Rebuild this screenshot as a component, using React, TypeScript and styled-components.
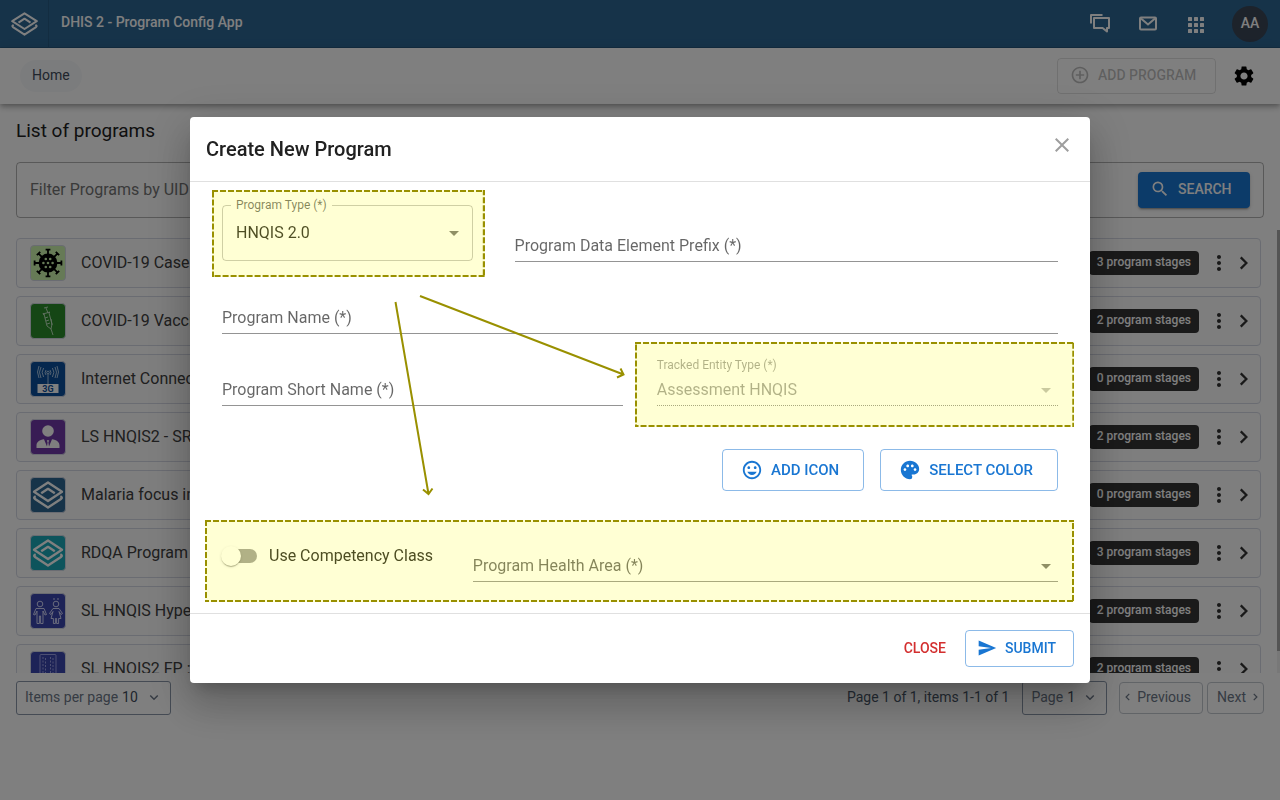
import React from 'react';
import styled, { createGlobalStyle } from 'styled-components';
import {
  MdAddCircleOutline,
  MdArrowDropDown,
  MdClose,
  MdInsertEmoticon,
  MdMoreVert,
  MdPalette,
  MdSearch,
  MdSend,
  MdSettings,
} from 'react-icons/md';

const GlobalStyle = createGlobalStyle`
  * { box-sizing: border-box; }
  body {
    margin: 0;
    background: #ffffff;
    color: #212121;
    font-family: Roboto, "Liberation Sans", sans-serif;
    font-size: 16px;
    line-height: 24px;
  }
  button, input, select { font-family: inherit; margin: 0; }
`;

/* ---------- Top bars ---------- */

const HeaderBar = styled.header`
  display: flex;
  align-items: center;
  height: 48px;
  background: #2c6693;
  color: #ffffff;
  border-bottom: 1px solid #265a82;
`;

const LogoLink = styled.a`
  display: flex;
  align-items: center;
  justify-content: center;
  width: 49px;
  height: 47px;
  border-right: 1px solid #265a82;
  color: #ffffff;
`;

const AppName = styled.div`
  flex: 1;
  padding: 0 0 4px 12px;
  font-size: 14px;
  font-weight: 500;
  line-height: 20px;
`;

const HeaderActions = styled.nav`
  display: flex;
  align-items: center;
  padding-right: 12px;
`;

const HeaderButton = styled.button`
  display: flex;
  align-items: center;
  justify-content: center;
  width: 48px;
  height: 47px;
  padding: 0;
  border: 0;
  background: transparent;
  color: #ffffff;
`;

const Avatar = styled.button`
  width: 36px;
  height: 36px;
  margin-left: 12px;
  padding: 0 0 2px;
  border: 0;
  border-radius: 50%;
  background: #3a4657;
  color: #ffffff;
  font-size: 14px;
  font-weight: 500;
`;

const SubBar = styled.div`
  position: relative;
  display: flex;
  align-items: center;
  justify-content: space-between;
  height: 56px;
  padding: 0 24px 0 20px;
  background: #ffffff;
  box-shadow: 0 2px 4px -1px rgba(0, 0, 0, 0.2), 0 4px 5px rgba(0, 0, 0, 0.14),
    0 1px 10px rgba(0, 0, 0, 0.12);
`;

const Crumb = styled.a`
  padding: 3px 12px 5px;
  border-radius: 16px;
  background: #f7f9fb;
  color: #404b5a;
  font-size: 14px;
  text-decoration: none;
`;

const SubActions = styled.div`
  display: flex;
  align-items: center;
  gap: 16px;
`;

const IconButton = styled.button`
  display: flex;
  align-items: center;
  justify-content: center;
  padding: 0;
  border: 0;
  background: transparent;
  color: #000000;
`;

/* ---------- Buttons ---------- */

const Button = styled.button<{ $size?: 'large' | 'medium'; $tone?: 'fill' | 'outline' | 'danger' }>`
  display: inline-flex;
  align-items: center;
  height: ${(p) => (p.$size === 'large' ? 42 : 36)}px;
  padding: ${(p) => (p.$size === 'large' ? '0 24px 0 18px' : '0 12px 2px')};
  gap: 8px;
  border: 1px solid rgba(25, 118, 210, 0.5);
  border-radius: 4px;
  background: transparent;
  color: #1976d2;
  font-size: ${(p) => (p.$size === 'large' ? 15 : 14)}px;
  font-weight: 500;
  line-height: 24px;
  text-transform: uppercase;
  white-space: nowrap;

  ${(p) =>
    p.$tone === 'fill' &&
    `
    border: 0;
    background: #1976d2;
    color: #ffffff;
    box-shadow: 0 3px 1px -2px rgba(0, 0, 0, 0.2), 0 2px 2px rgba(0, 0, 0, 0.14),
      0 1px 5px rgba(0, 0, 0, 0.12);
  `}
  ${(p) => p.$tone === 'danger' && 'border: 0; padding: 0 11px 2px; color: #d32f2f;'}

  &:disabled {
    border-color: rgba(0, 0, 0, 0.12);
    color: rgba(0, 0, 0, 0.26);
  }
`;

const AddProgramButton = styled(Button)`
  width: 159px;
`;

const SearchButton = styled(Button)`
  width: 112px;
`;

/* ---------- Program list ---------- */

const Main = styled.main`
  padding: 16px 0 0 16px;
`;

const Heading = styled.h1`
  margin: 0;
  font-size: 19px;
  font-weight: 400;
  line-height: 22px;
`;

const FilterBox = styled.div`
  display: flex;
  align-items: center;
  height: 56px;
  margin: 20px 16px 0 0;
  padding: 0 13px;
  border: 1px solid rgba(0, 0, 0, 0.3);
  border-radius: 4px;
`;

const FilterInput = styled.input`
  flex: 1;
  min-width: 0;
  padding: 0;
  border: 0;
  outline: 0;
  background: transparent;
  font-size: 16px;
  line-height: 24px;

  &::placeholder {
    color: #757575;
    opacity: 1;
  }
`;

const ListArea = styled.div`
  display: flex;
  height: calc(100vh - 357px);
  min-height: 116px;
  margin-top: 12px;
`;

const ScrollList = styled.ul`
  flex: 1;
  min-width: 0;
  margin: 0;
  padding: 8px 16px 0 0;
  list-style: none;
  overflow: hidden;
`;

const ScrollTrack = styled.div`
  width: 3px;
  background: #f1f1f1;
`;

const ScrollThumb = styled.div`
  height: 95%;
  background: #a9a9a9;
`;

const Row = styled.li`
  display: flex;
  align-items: center;
  height: 50px;
  margin-bottom: 8px;
  padding: 0 5px 0 13px;
  border: 1px solid #d5d8e4;
  border-radius: 4px;
  background: #fcfcfc;
`;

const Tile = styled.span<{ $color: string }>`
  display: flex;
  align-items: center;
  justify-content: center;
  flex: none;
  width: 36px;
  height: 36px;
  border: 1px solid #d5d8e4;
  border-radius: 4px;
  background: ${(p) => p.$color};
  overflow: hidden;
`;

const RowName = styled.span`
  flex: 1;
  padding-left: 15px;
  color: #404040;
  white-space: nowrap;
`;

const StageBadge = styled.span`
  margin-right: 8px;
  padding: 0 8px 2px;
  border-radius: 4px;
  background: #343434;
  color: #ffffff;
  font-size: 12px;
  font-weight: 500;
  line-height: 22px;
`;

const RowMenu = styled(IconButton)`
  width: 24px;
  color: #333333;
`;

/* ---------- Pager ---------- */

const Pager = styled.div`
  display: flex;
  align-items: center;
  margin: 8px 16px 0 0;
  color: #6c7787;
  font-size: 14px;
  line-height: 20px;
`;

const PagerSelect = styled.label`
  display: flex;
  align-items: center;
  gap: 4px;
  height: 34px;
  padding: 0 10px 2px 8px;
  border: 1px solid #8a96a8;
  border-radius: 3px;
  color: #6c7787;
`;

const PagerNative = styled.select<{ $width: number }>`
  appearance: none;
  width: ${(p) => p.$width}px;
  padding: 0;
  border: 0;
  background: transparent;
  color: #404b5a;
  font-size: 14px;
  line-height: 20px;
`;

const PagerStatus = styled.span`
  margin: 0 13px 0 auto;
  padding-bottom: 2px;
  color: #4a5768;
`;

const PagerButton = styled.button<{ $icon: 'before' | 'after' }>`
  display: flex;
  align-items: center;
  gap: 4px;
  height: 32px;
  padding: ${(p) => (p.$icon === 'before' ? '0 11px 2px 3px' : '0 3px 2px 9px')};
  border: 1px solid #c3c8cf;
  border-radius: 4px;
  background: transparent;
  color: #6c7787;
  font-size: 14px;
`;

const PagerSteps = styled.div`
  display: flex;
  gap: 4px;
  margin-left: 12px;
`;

/* ---------- Dialog ---------- */

const Backdrop = styled.div`
  position: fixed;
  inset: 0;
  display: flex;
  align-items: center;
  justify-content: center;
  background: rgba(0, 0, 0, 0.5);
`;

const Dialog = styled.section`
  width: calc(100% - 64px);
  max-width: 900px;
  border-radius: 4px;
  background: #ffffff;
  box-shadow: 0 11px 15px -7px rgba(0, 0, 0, 0.2), 0 24px 38px 3px rgba(0, 0, 0, 0.14),
    0 9px 46px 8px rgba(0, 0, 0, 0.12);
`;

const DialogHeader = styled.div`
  display: flex;
  align-items: flex-start;
  justify-content: space-between;
  height: 64px;
  padding: 16px;
`;

const DialogTitle = styled.h2`
  margin: 0;
  font-size: 20px;
  font-weight: 500;
  line-height: 32px;
`;

const CloseIconButton = styled(IconButton)`
  width: 24px;
  height: 24px;
  color: #9e9e9e;
`;

const DialogBody = styled.div`
  position: relative;
  display: flex;
  flex-direction: column;
  gap: 43px;
  padding: 23px 32px 31px;
  border-top: 1px solid #e0e0e0;
  border-bottom: 1px solid #e0e0e0;
`;

const DialogFooter = styled.div`
  display: flex;
  align-items: center;
  justify-content: flex-end;
  gap: 8px;
  padding: 16px;
`;

const SubmitButton = styled(Button)`
  height: 37px;
  padding: 0 17px 2px 11px;
`;

const FieldGroup = styled.div`
  display: flex;
  flex-direction: column;
  gap: 24px;
`;

const FieldRow = styled.div`
  display: flex;
  justify-content: space-between;
`;

const TypeRow = styled(FieldRow)`
  height: 57px;
  align-items: flex-start;
`;

const Cell = styled.div<{ $width: number; $end?: boolean }>`
  position: relative;
  width: ${(p) => p.$width}%;
  align-self: ${(p) => (p.$end ? 'flex-end' : 'flex-start')};
`;

const OutlinedField = styled.div`
  display: flex;
  align-items: center;
  height: 56px;
  padding: 0 6px 0 13px;
  border: 1px solid rgba(0, 0, 0, 0.23);
  border-radius: 4px;
  color: rgba(0, 0, 0, 0.54);
`;

const NotchLabel = styled.label`
  position: absolute;
  top: -8px;
  left: 9px;
  padding: 0 5px;
  background: #ffffff;
  color: rgba(0, 0, 0, 0.6);
  font-size: 12px;
  line-height: 16px;
`;

const NativeSelect = styled.select`
  appearance: none;
  flex: 1;
  min-width: 0;
  padding: 0;
  border: 0;
  outline: 0;
  background: transparent;
  color: rgba(0, 0, 0, 0.87);
  font-size: 16px;
  line-height: 24px;
  opacity: 1;

  &:disabled { color: rgba(0, 0, 0, 0.38); }
`;

const LineField = styled.div<{ $disabled?: boolean }>`
  display: grid;
  height: 48px;
  padding-top: 16px;
  border-bottom: 1px ${(p) => (p.$disabled ? 'dotted' : 'solid')} rgba(0, 0, 0, 0.42);
  color: ${(p) => (p.$disabled ? 'rgba(0, 0, 0, 0.26)' : 'rgba(0, 0, 0, 0.54)')};

  & > * { grid-area: 1 / 1; }
`;

const RestingLabel = styled.label`
  align-self: center;
  color: rgba(0, 0, 0, 0.6);
  font-size: 16px;
  line-height: 24px;
  pointer-events: none;
`;

const FloatingLabel = styled.label`
  position: absolute;
  top: -1px;
  left: 0;
  color: rgba(0, 0, 0, 0.38);
  font-size: 12px;
  line-height: 16px;
`;

const LineInput = styled.input`
  width: 100%;
  min-width: 0;
  padding: 0;
  border: 0;
  outline: 0;
  background: transparent;
  font-size: 16px;
`;

const SelectSlot = styled.div`
  display: flex;
  align-items: center;
`;

const ActionRow = styled.div`
  display: flex;
  justify-content: flex-end;
  gap: 16px;
`;

const ToggleLabel = styled.label`
  display: flex;
  align-items: center;
  height: 44px;
  gap: 12px;
`;

const Toggle = styled.input`
  appearance: none;
  display: flex;
  align-items: center;
  width: 33px;
  height: 14px;
  margin: 0 0 0 2px;
  border-radius: 7px;
  background: rgba(0, 0, 0, 0.38);

  &::before {
    content: '';
    flex: none;
    width: 20px;
    height: 20px;
    margin-left: -3px;
    border-radius: 50%;
    background: #ffffff;
    box-shadow: 0 2px 1px -1px rgba(0, 0, 0, 0.2), 0 1px 1px rgba(0, 0, 0, 0.14),
      0 1px 3px rgba(0, 0, 0, 0.12);
  }
`;

/* ---------- Annotations ---------- */

const Spot = styled.div<{ $inset: string }>`
  position: absolute;
  inset: ${(p) => p.$inset};
  background: rgba(255, 255, 40, 0.2);
  pointer-events: none;

  svg { display: block; width: 100%; height: 100%; overflow: hidden; }
`;

const Arrows = styled.svg`
  position: absolute;
  top: 0;
  left: 0;
  pointer-events: none;
`;

function Highlight({ inset }: { inset: string }) {
  return (
    <Spot $inset={inset}>
      <svg aria-hidden="true">
        <rect width="100%" height="100%" fill="none" stroke="#999000" strokeWidth="4" strokeDasharray="6 2" />
      </svg>
    </Spot>
  );
}

/* ---------- Icons ---------- */

function LayersLogo({ size }: { size: number }) {
  return (
    <svg width={size} height={size} viewBox="0 0 32 32" fill="none" stroke="#ffffff" strokeWidth="2.2" strokeLinejoin="round" aria-hidden="true">
      <path d="M16 4.2 29.2 13 16 21.6 2.8 13Z" />
      <path d="M9.6 14.4 16 10.2l6.4 4.2" />
      <path d="M4.4 17.2c-1.8 1-1.8 1.8-.6 2.6L16 27.8l12.2-8c1.2-.8 1.2-1.6-.6-2.6" />
    </svg>
  );
}

function HeaderLogo() {
  return (
    <svg width="28" height="26" viewBox="0 0 28 26" fill="none" stroke="#ffffff" strokeWidth="2" strokeLinejoin="round" aria-hidden="true">
      <path d="M14.5 2.3 26.8 10.2 14.5 18 2.2 10.2Z" />
      <path d="M8.5 11.6 14.5 7.7l6 3.9" />
      <path d="M3.6 13.8c-1.6 1-1.6 1.6-.6 2.3l11.5 7.6L26 16.1c1-.7 1-1.3-.6-2.3" />
    </svg>
  );
}

function ChatIcon() {
  return (
    <svg width="22" height="22" viewBox="0 0 22 22" fill="none" stroke="currentColor" strokeWidth="2" strokeLinejoin="round" aria-hidden="true">
      <path d="M2 10.5V2h11.5" />
      <path d="M5 5h15v10h-2v3.6L13.6 15H5z" />
    </svg>
  );
}

function MailIcon() {
  return (
    <svg width="20" height="16" viewBox="0 0 20 16" fill="none" stroke="currentColor" strokeWidth="2" aria-hidden="true">
      <rect x="2" y="1.5" width="16" height="12" rx="1" />
      <path d="m3 2.500 7 6 7-6" />
    </svg>
  );
}

function AppsIcon() {
  return (
    <svg width="16" height="18" viewBox="0 0 16 18" fill="currentColor" aria-hidden="true">
      {[2, 8, 14].map((y) =>
        [0, 6, 12].map((x) => <rect key={`${x}-${y}`} x={x} y={y} width="4" height="4" rx="0.6" />),
      )}
    </svg>
  );
}

function Chevron({ dir, size, weight }: { dir: 'left' | 'right' | 'down'; size: number; weight: number }) {
  const d = { left: 'M10 3 5 8l5 5', right: 'm6 3 5 5-5 5', down: 'm3 6 5 5 5-5' }[dir];
  return (
    <svg width={size} height={size} viewBox="0 0 16 16" fill="none" stroke="currentColor" strokeWidth={weight} aria-hidden="true">
      <path d={d} />
    </svg>
  );
}

function VirusIcon() {
  return (
    <svg width="30" height="30" viewBox="0 0 30 30" aria-hidden="true">
      <g stroke="#000000" strokeWidth="1.8">
        {[0, 45, 90, 135, 180, 225, 270, 315].map((a) => (
          <path key={a} d="M15 7V2M12.6 1.6h4.8" transform={`rotate(${a} 15 15)`} />
        ))}
      </g>
      <circle cx="15" cy="15" r="9.4" />
      <g fill="#cdf5ad">
        {[[12.8, 11], [17.2, 11], [10.4, 15], [15, 15], [19.6, 15], [12.8, 19], [17.2, 19]].map(([x, y]) => (
          <circle key={`${x}-${y}`} cx={x} cy={y} r="1.3" />
        ))}
      </g>
    </svg>
  );
}

function SyringeIcon() {
  return (
    <svg width="34" height="34" viewBox="0 0 34 34" fill="none" stroke="#c8e6c9" strokeWidth="0.9" aria-hidden="true">
      <path d="m13 4 4-1M15 4l2 5M12 10l7-2M13 10l3 12 4 3 1-5-3-11M14 14l3-1M15 17l3-1M16 20l3-1M20 25l2 6M18 9l1-1M12 9l1 2M20 15l1 6" />
    </svg>
  );
}

function AntennaIcon() {
  return (
    <svg width="34" height="34" viewBox="0 0 34 34" fill="none" stroke="#b9d3ec" strokeWidth="0.9" aria-hidden="true">
      <path d="M17 12v10M15 8q-2 3 0 5M19 8q2 3 0 5M12.6 6q-3 4 0 9M21.4 6q3 4 0 9M10 5q-3 5 0 11M24 5q3 5 0 11M8 4q-3 6 0 12M26 4q3 6 0 12" />
      <circle cx="17" cy="10.5" r="1.3" />
      <rect x="6.5" y="22" width="21" height="9" fill="#ffffff" stroke="none" />
      <text x="17" y="29.6" textAnchor="middle" fill="#0b4f9c" stroke="none" fontSize="9" fontWeight="700">3G</text>
    </svg>
  );
}

function PersonIcon() {
  return (
    <svg width="34" height="34" viewBox="0 0 34 34" fill="#ffffff" aria-hidden="true">
      <circle cx="17" cy="11" r="5.8" />
      <path d="M5.5 28v-2.5c0-3.5 3-5.5 7.5-6.2l3 7.2.6-4-.8-2.2h2.4l-.8 2.2.6 4 3-7.2c4.5.7 7.5 2.7 7.500 6.2V28z" />
    </svg>
  );
}

function ChildrenIcon() {
  return (
    <svg width="34" height="34" viewBox="0 0 34 34" fill="none" stroke="#e0e3ff" strokeWidth="0.9" aria-hidden="true">
      <circle cx="9" cy="10" r="2.8" />
      <path d="M5 14.5h8l2.5 6-1.5.5-2-4V29.5H9.6V22H8.4v7.5H6V17l-2 4-1.5-.5z" />
      <circle cx="25" cy="10" r="2.8" />
      <path d="M22 5h2M26 5h2M22 14.5h6l3.5 5-1.5 1-2-3 2 7h-2.4v5H25.6v-5h-1.2v5H22.4v-5H20l2-7-2 3-1.5-1z" />
    </svg>
  );
}

function BlisterIcon() {
  return (
    <svg width="34" height="34" viewBox="0 0 34 34" fill="none" stroke="#c5c9ff" strokeWidth="0.7" aria-hidden="true">
      <rect x="9" y="2.5" width="16" height="29" rx="1" />
      <g strokeDasharray="2 1.5">
        <path d="M12 5v25M14.5 6v24M19.5 5v25M22 6v24" />
      </g>
    </svg>
  );
}

/* ---------- Data ---------- */

const programs = [
  { name: 'COVID-19 Case Surveillance', stages: 3, color: '#cdf5ad', icon: <VirusIcon /> },
  { name: 'COVID-19 Vaccination', stages: 2, color: '#2b8c2b', icon: <SyringeIcon /> },
  { name: 'Internet Connectivity', stages: 0, color: '#0b4f9c', icon: <AntennaIcon /> },
  { name: 'LS HNQIS2 - SRH', stages: 2, color: '#7138a8', icon: <PersonIcon /> },
  { name: 'Malaria focus investigation', stages: 0, color: '#2c6693', icon: <LayersLogo size={34} /> },
  { name: 'RDQA Program', stages: 3, color: '#1ba9b8', icon: <LayersLogo size={34} /> },
  { name: 'SL HNQIS Hypertension', stages: 2, color: '#3b46ae', icon: <ChildrenIcon /> },
  { name: 'SL HNQIS2 FP : Counselling', stages: 2, color: '#3b46ae', icon: <BlisterIcon /> },
];

function TextLine({ id, label }: { id: string; label: string }) {
  return (
    <LineField>
      <LineInput id={id} type="text" />
      <RestingLabel htmlFor={id}>{label}</RestingLabel>
    </LineField>
  );
}

export default function App() {
  return (
    <>
      <GlobalStyle />
      <HeaderBar>
        <LogoLink href="#home" aria-label="Dashboard"><HeaderLogo /></LogoLink>
        <AppName>DHIS 2 - Program Config App</AppName>
        <HeaderActions>
          <HeaderButton aria-label="Interpretations"><ChatIcon /></HeaderButton>
          <HeaderButton aria-label="Messages"><MailIcon /></HeaderButton>
          <HeaderButton aria-label="Apps"><AppsIcon /></HeaderButton>
          <Avatar>AA</Avatar>
        </HeaderActions>
      </HeaderBar>
      <SubBar>
        <Crumb href="#home">Home</Crumb>
        <SubActions>
          <AddProgramButton disabled><MdAddCircleOutline size={20} />Add Program</AddProgramButton>
          <IconButton aria-label="Settings"><MdSettings size={24} /></IconButton>
        </SubActions>
      </SubBar>

      <Main>
        <Heading>List of programs</Heading>
        <FilterBox>
          <FilterInput type="text" aria-label="Filter Programs" placeholder="Filter Programs by UID" />
          <SearchButton $tone="fill"><MdSearch size={20} />Search</SearchButton>
        </FilterBox>
        <ListArea>
          <ScrollList>
            {programs.map((p) => (
              <Row key={p.name}>
                <Tile $color={p.color}>{p.icon}</Tile>
                <RowName>{p.name}</RowName>
                <StageBadge>{p.stages} program stages</StageBadge>
                <RowMenu aria-label="Program menu"><MdMoreVert size={24} /></RowMenu>
                <RowMenu as="span"><Chevron dir="right" size={18} weight={2} /></RowMenu>
              </Row>
            ))}
          </ScrollList>
          <ScrollTrack><ScrollThumb /></ScrollTrack>
        </ListArea>
        <Pager>
          <PagerSelect>
            Items per page
            <PagerNative $width={22} defaultValue="10"><option>10</option></PagerNative>
            <Chevron dir="down" size={12} weight={2} />
          </PagerSelect>
          <PagerStatus>Page 1 of 1, items 1-1 of 1</PagerStatus>
          <PagerSelect>
            Page
            <PagerNative $width={13} defaultValue="1"><option>1</option></PagerNative>
            <Chevron dir="down" size={12} weight={2} />
          </PagerSelect>
          <PagerSteps>
            <PagerButton $icon="before"><Chevron dir="left" size={10} weight={2} />Previous</PagerButton>
            <PagerButton $icon="after">Next<Chevron dir="right" size={10} weight={2} /></PagerButton>
          </PagerSteps>
        </Pager>
      </Main>

      <Backdrop>
        <Dialog role="dialog" aria-modal="true" aria-labelledby="dialog-title">
          <DialogHeader>
            <DialogTitle id="dialog-title">Create New Program</DialogTitle>
            <CloseIconButton aria-label="Close dialog"><MdClose size={24} /></CloseIconButton>
          </DialogHeader>
          <DialogBody>
            <FieldGroup>
              <TypeRow>
                <Cell $width={30}>
                  <OutlinedField>
                    <NativeSelect id="program-type"><option>HNQIS 2.0</option></NativeSelect>
                    <MdArrowDropDown size={24} />
                  </OutlinedField>
                  <NotchLabel htmlFor="program-type">Program Type (*)</NotchLabel>
                  <Highlight inset="-15px -12px -16px -10px" />
                </Cell>
                <Cell $width={65} $end>
                  <TextLine id="prefix" label="Program Data Element Prefix (*)" />
                </Cell>
              </TypeRow>
              <TextLine id="program-name" label="Program Name (*)" />
              <FieldRow>
                <Cell $width={48}>
                  <TextLine id="short-name" label="Program Short Name (*)" />
                </Cell>
                <Cell $width={48}>
                  <LineField $disabled>
                    <SelectSlot>
                      <NativeSelect id="tracked-entity" disabled><option>Assessment HNQIS</option></NativeSelect>
                      <MdArrowDropDown size={24} />
                    </SelectSlot>
                  </LineField>
                  <FloatingLabel htmlFor="tracked-entity">Tracked Entity Type (*)</FloatingLabel>
                  <Highlight inset="-16px -16px -21px -22px" />
                </Cell>
              </FieldRow>
            </FieldGroup>
            <ActionRow>
              <Button $size="large"><MdInsertEmoticon size={22} />Add Icon</Button>
              <Button $size="large"><MdPalette size={22} />Select Color</Button>
            </ActionRow>
            <Cell $width={100}>
              <FieldRow>
                <ToggleLabel><Toggle type="checkbox" role="switch" />Use Competency Class</ToggleLabel>
                <Cell $width={70}>
                  <LineField>
                    <SelectSlot>
                      <NativeSelect id="health-area"><option value="" aria-label="None" /></NativeSelect>
                      <MdArrowDropDown size={24} />
                    </SelectSlot>
                    <RestingLabel htmlFor="health-area">Program Health Area (*)</RestingLabel>
                  </LineField>
                </Cell>
              </FieldRow>
              <Highlight inset="-14px -16px -20px -17px" />
            </Cell>
            <Arrows width="450" height="330" viewBox="190 182 450 330" fill="none" stroke="#999000" strokeWidth="2" aria-hidden="true">
              <path d="M420 296 623.5 374.5M620.5 368.5l3 6-6.5 3" />
              <path d="M395.5 302 428.5 494M423 489.5l5.5 4.5 4-5.5" />
            </Arrows>
          </DialogBody>
          <DialogFooter>
            <Button $tone="danger">Close</Button>
            <SubmitButton><MdSend size={20} />Submit</SubmitButton>
          </DialogFooter>
        </Dialog>
      </Backdrop>
    </>
  );
}
